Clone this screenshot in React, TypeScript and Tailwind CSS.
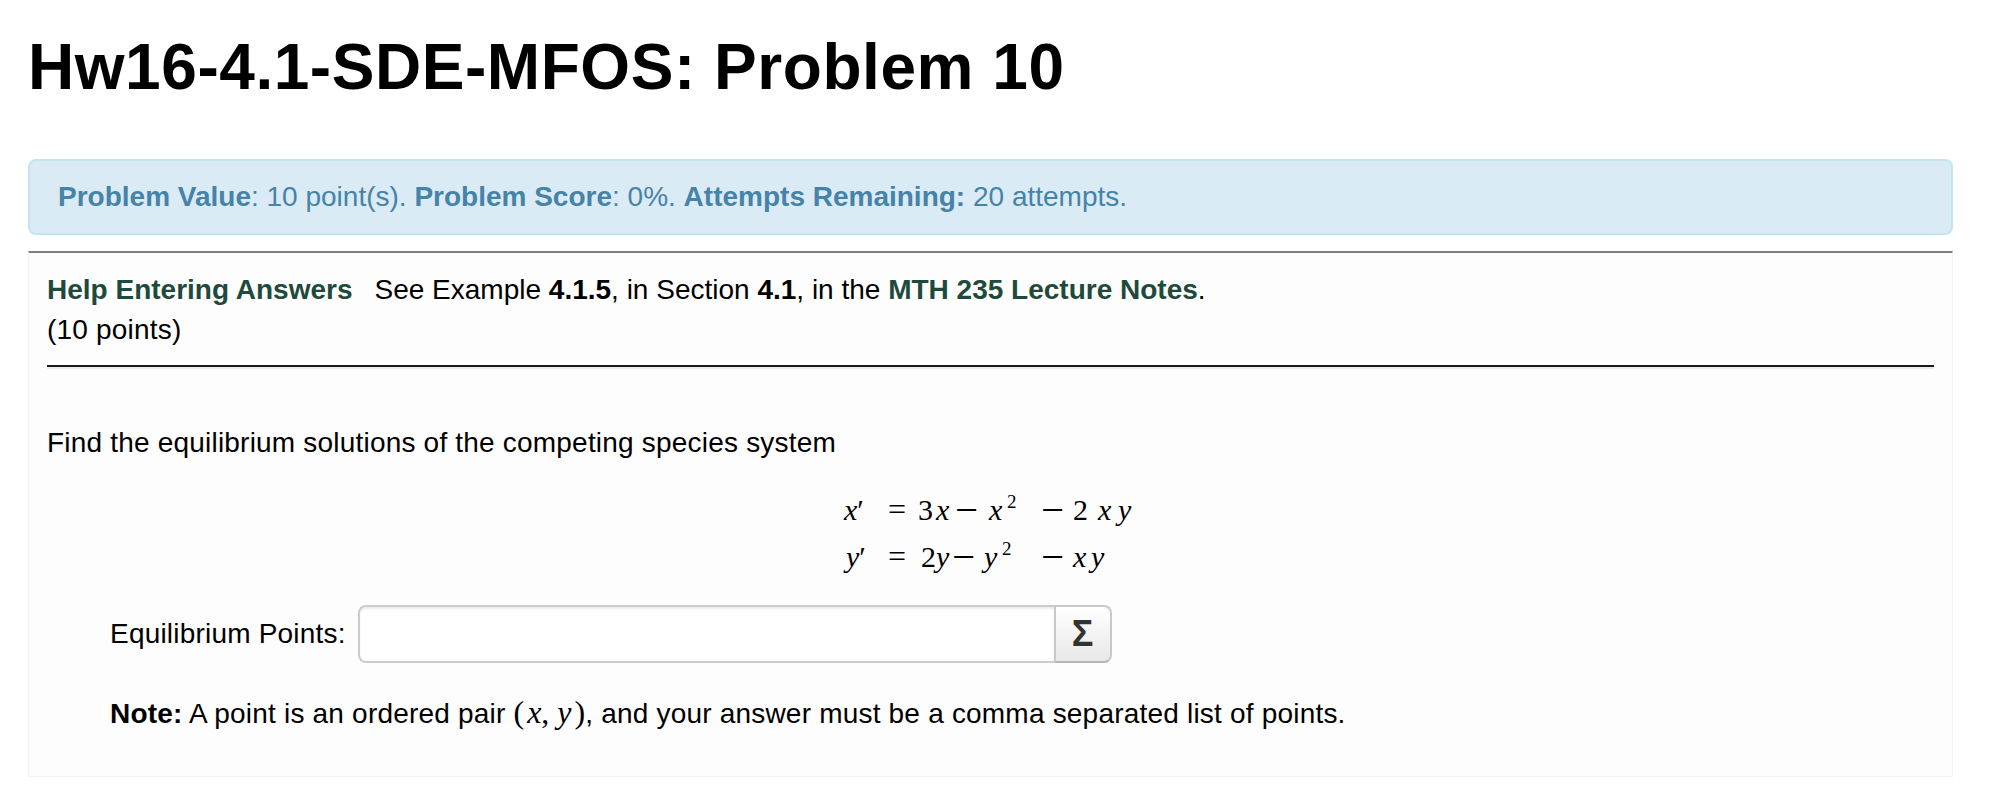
import React from 'react';

type Cell = [React.ReactNode, number, string?];

const x = <span className="italic">x</span>;
const y = <span className="italic">y</span>;
const minus = <span className="font-['Liberation_Sans'] inline-block scale-x-[1.3] origin-center">−</span>;
const sq = <span className="text-[19px] leading-none relative -top-[12px]">2</span>;

// glyph-by-glyph cells so both rows line up like the MathJax array
const row1: Cell[] = [
  [<>{x}′</>, 44], ['=', 30, 'text-[32px]'], ['3', 18], [x, 22], [minus, 31], [x, 18], [sq, 37],
  [minus, 29], ['2', 25], [x, 20], [y, 0],
];
const row2: Cell[] = [
  [<>{y}′</>, 42], ['=', 33, 'text-[32px]'], ['2', 15], [y, 19], [minus, 29], [y, 18], [sq, 42],
  [minus, 29], [x, 18], [y, 0],
];

const Row = ({ cells, className }: { cells: Cell[]; className?: string }) => (
  <div className={`flex items-baseline h-[47px] ${className ?? ''}`}>
    {cells.map(([c, w, cls], i) => (
      <span key={i} className={`shrink-0 leading-[47px] ${cls ?? ''}`} style={w ? { width: w } : undefined}>
        {c}
      </span>
    ))}
  </div>
);

const Equations = () => (
  <div className="w-[293px] mx-auto font-['Liberation_Serif'] text-[30px] mt-[23px] tracking-normal">
    <Row cells={row1} />
    <Row cells={row2} className="pl-[2px]" />
  </div>
);

export default function App() {
  return (
    <div className="w-[2006px] h-[800px] bg-white font-['Liberation_Sans',Arial,sans-serif] text-[28px] leading-[40px] tracking-[0.2px] text-black pl-[28px] pr-[53px]">
      <h1 className="pt-[32px] text-[64px] font-bold leading-[70px] tracking-[0.55px]">
        Hw16-4.1-SDE-MFOS: Problem 10
      </h1>

      <div className="mt-[57px] border-2 border-[#c3e5f0] bg-[#dbebf6] rounded-[8px] pl-[28px] py-[16px] text-[#4583a9] tracking-normal">
        <b>Problem Value</b>: 10 point(s). <b>Problem Score</b>: 0%. <b>Attempts Remaining:</b> 20 attempts.
      </div>

      <div className="mt-[16px] border-t-2 border-t-[#808080] border-x border-b border-x-[#f3f3f3] border-b-[#f3f3f3] bg-[#fdfdfd] h-[526px] px-[18px] pt-[17px]">
        <div className="tracking-normal">
          <b className="text-[#1f4a3b]">Help Entering Answers</b>
          <span className="ml-[22px]">
            See Example <b>4.1.5</b>, in Section <b>4.1</b>, in the{' '}
            <b className="text-[#1f4a3b]">MTH 235 Lecture Notes</b>.
          </span>
        </div>
        <div>(10 points)</div>
        <hr className="mt-[15px] border-0 border-t-2 border-t-[#1a1a1a] border-b-2 border-b-[#ececec]" />

        <p className="mt-[54px]">Find the equilibrium solutions of the competing species system</p>

        <Equations />

        <div className="ml-[63px] mt-[25px] flex items-center">
          <span>Equilibrium Points:</span>
          <div className="ml-[12px] flex h-[58px]">
            <div className="w-[696px] bg-white border-2 border-[#cccccc] border-r-0 rounded-l-[8px] shadow-[inset_0_2px_2px_rgba(0,0,0,0.075)]" />
            <div className="w-[58px] flex items-center justify-center border-2 border-[#c8c8c8] border-b-[#b5b5b5] rounded-r-[8px] bg-gradient-to-b from-white to-[#e8e8e8] text-[36px] font-bold text-[#333]">
              Σ
            </div>
          </div>
        </div>

        <p className="ml-[63px] mt-[29px]">
          <b>Note:</b> A point is an ordered pair{' '}
          <span className="font-['Liberation_Serif'] text-[32px] tracking-normal">
            (<span className="ml-[3px] italic">x</span>,<span className="ml-[8px] italic">y</span><span className="ml-[3px]">)</span>
          </span>
          , and your answer must be a comma separated list of points.
        </p>
      </div>
    </div>
  );
}
